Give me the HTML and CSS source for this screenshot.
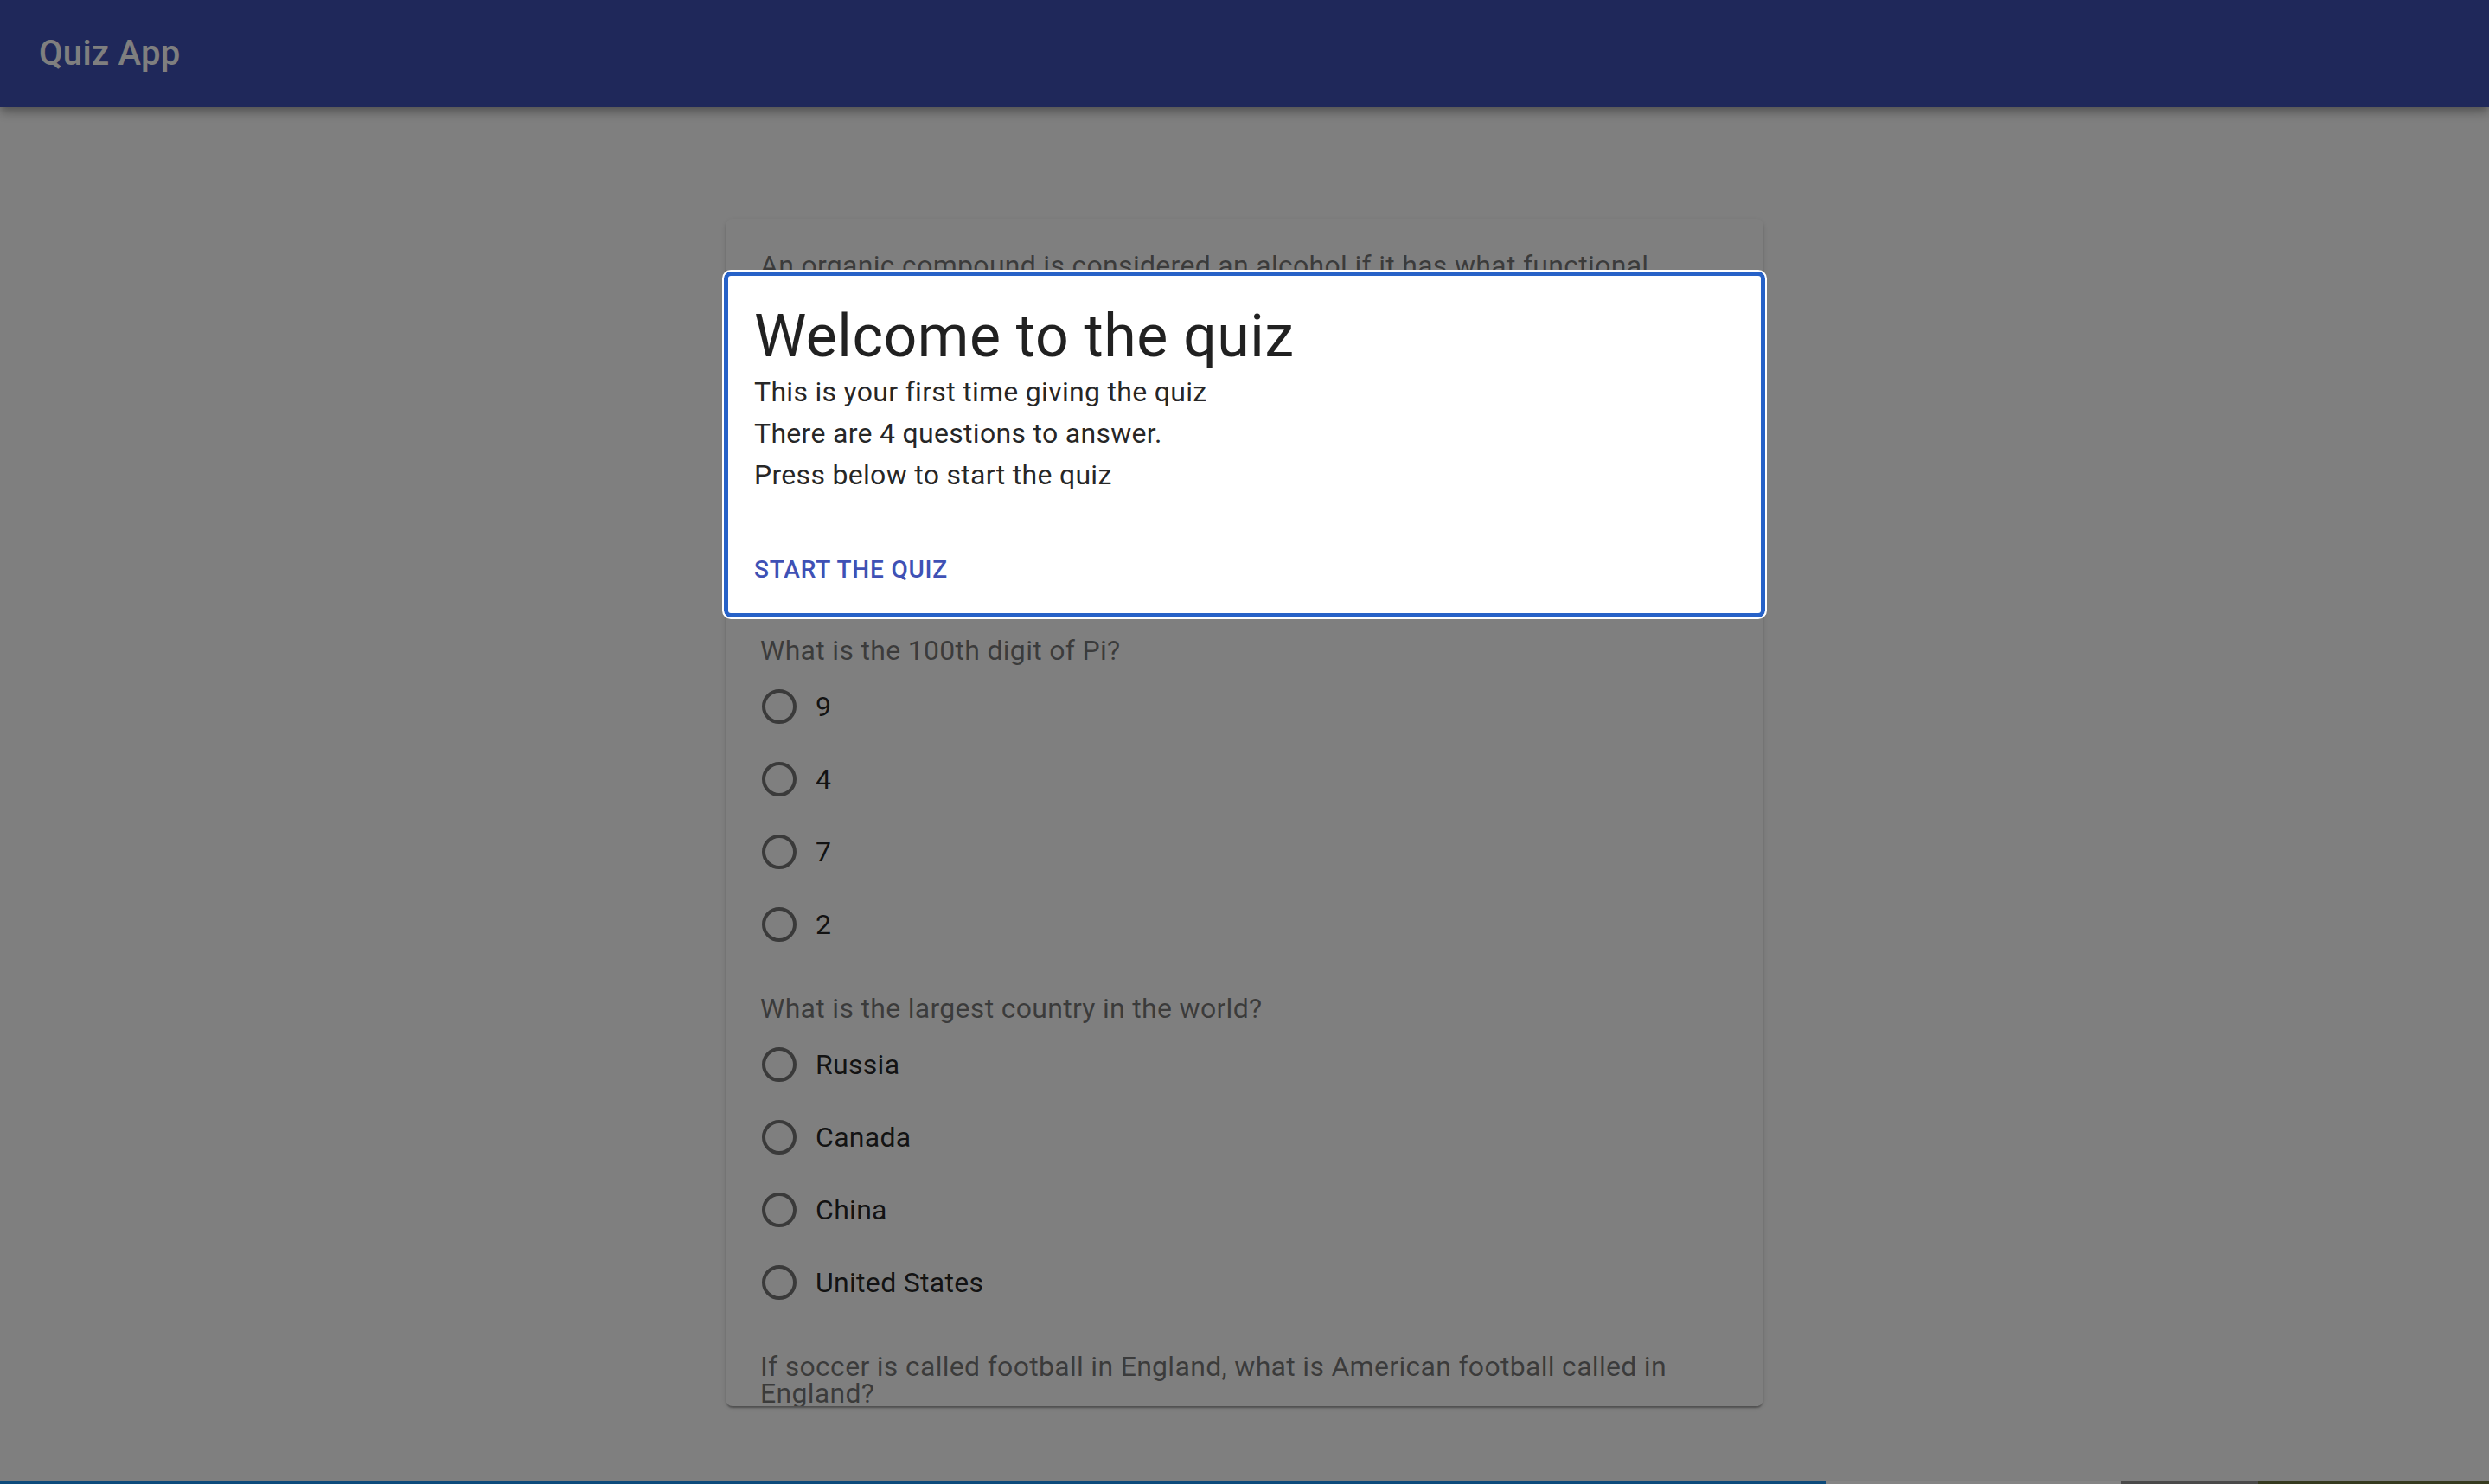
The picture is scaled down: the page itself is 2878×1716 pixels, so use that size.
FILE: index.html
```html
<!DOCTYPE html>
<html lang="en">
<head>
<meta charset="utf-8">
<title>Quiz App</title>
<link rel="stylesheet" href="styles.css">
</head>
<body>
<div class="page">
  <header class="appbar">
    <h1 class="appbar-title">Quiz App</h1>
  </header>
  <main class="main">
    <section class="card">
      <div class="question">
        <div class="q-label">An organic compound is considered an alcohol if it has what functional group?</div>
        <div class="options">
          <label class="option"><span class="radio"><svg viewBox="0 0 48 48" width="48" height="48"><circle cx="24" cy="24" r="18" fill="none" stroke="currentColor" stroke-width="4"/></svg></span><span class="opt-text">Hydroxyl</span></label>
          <label class="option"><span class="radio"><svg viewBox="0 0 48 48" width="48" height="48"><circle cx="24" cy="24" r="18" fill="none" stroke="currentColor" stroke-width="4"/></svg></span><span class="opt-text">Carbonyl</span></label>
          <label class="option"><span class="radio"><svg viewBox="0 0 48 48" width="48" height="48"><circle cx="24" cy="24" r="18" fill="none" stroke="currentColor" stroke-width="4"/></svg></span><span class="opt-text">Carboxyl</span></label>
          <label class="option"><span class="radio"><svg viewBox="0 0 48 48" width="48" height="48"><circle cx="24" cy="24" r="18" fill="none" stroke="currentColor" stroke-width="4"/></svg></span><span class="opt-text">Amine</span></label>
        </div>
      </div>
      <div class="question">
        <div class="q-label">What is the 100th digit of Pi?</div>
        <div class="options">
          <label class="option"><span class="radio"><svg viewBox="0 0 48 48" width="48" height="48"><circle cx="24" cy="24" r="18" fill="none" stroke="currentColor" stroke-width="4"/></svg></span><span class="opt-text">9</span></label>
          <label class="option"><span class="radio"><svg viewBox="0 0 48 48" width="48" height="48"><circle cx="24" cy="24" r="18" fill="none" stroke="currentColor" stroke-width="4"/></svg></span><span class="opt-text">4</span></label>
          <label class="option"><span class="radio"><svg viewBox="0 0 48 48" width="48" height="48"><circle cx="24" cy="24" r="18" fill="none" stroke="currentColor" stroke-width="4"/></svg></span><span class="opt-text">7</span></label>
          <label class="option"><span class="radio"><svg viewBox="0 0 48 48" width="48" height="48"><circle cx="24" cy="24" r="18" fill="none" stroke="currentColor" stroke-width="4"/></svg></span><span class="opt-text">2</span></label>
        </div>
      </div>
      <div class="question">
        <div class="q-label">What is the largest country in the world?</div>
        <div class="options">
          <label class="option"><span class="radio"><svg viewBox="0 0 48 48" width="48" height="48"><circle cx="24" cy="24" r="18" fill="none" stroke="currentColor" stroke-width="4"/></svg></span><span class="opt-text">Russia</span></label>
          <label class="option"><span class="radio"><svg viewBox="0 0 48 48" width="48" height="48"><circle cx="24" cy="24" r="18" fill="none" stroke="currentColor" stroke-width="4"/></svg></span><span class="opt-text">Canada</span></label>
          <label class="option"><span class="radio"><svg viewBox="0 0 48 48" width="48" height="48"><circle cx="24" cy="24" r="18" fill="none" stroke="currentColor" stroke-width="4"/></svg></span><span class="opt-text">China</span></label>
          <label class="option"><span class="radio"><svg viewBox="0 0 48 48" width="48" height="48"><circle cx="24" cy="24" r="18" fill="none" stroke="currentColor" stroke-width="4"/></svg></span><span class="opt-text">United States</span></label>
        </div>
      </div>
      <div class="question">
        <div class="q-label">If soccer is called football in England, what is American football called in England?</div>
        <div class="options">
          <label class="option"><span class="radio"><svg viewBox="0 0 48 48" width="48" height="48"><circle cx="24" cy="24" r="18" fill="none" stroke="currentColor" stroke-width="4"/></svg></span><span class="opt-text">American football</span></label>
        </div>
      </div>
    </section>
  </main>
  <div class="dock-strip">
    <span class="seg seg-blue"></span>
    <span class="seg seg-gray"></span>
    <span class="seg seg-dark"></span>
    <span class="seg seg-olive"></span>
  </div>
</div>

<div class="backdrop"></div>

<div class="dialog" role="dialog">
  <h2 class="dialog-title">Welcome to the quiz</h2>
  <div class="dialog-body">
    <p>This is your first time giving the quiz</p>
    <p>There are 4 questions to answer.</p>
    <p>Press below to start the quiz</p>
  </div>
  <div class="dialog-actions">
    <button class="text-button" type="button">Start the quiz</button>
  </div>
</div>
</body>
</html>
```

FILE: styles.css
```css
* {
  box-sizing: border-box;
}

html, body {
  margin: 0;
  padding: 0;
  height: 100%;
}

body {
  font-family: Roboto, "Liberation Sans", Arial, sans-serif;
  background: #ffffff;
  color: rgba(0, 0, 0, 0.87);
  overflow: hidden;
}

.page {
  display: flex;
  flex-direction: column;
  height: 1716px;
}

.appbar {
  flex: 0 0 124px;
  display: flex;
  align-items: center;
  padding: 0 45px;
  background: #3f51b5;
  color: #ffffff;
  box-shadow: 0 4px 8px -2px rgba(0, 0, 0, 0.2), 0 8px 10px 0 rgba(0, 0, 0, 0.14), 0 2px 20px 0 rgba(0, 0, 0, 0.12);
  position: relative;
  z-index: 2;
}

.appbar-title {
  margin: 0;
  font-size: 40px;
  font-weight: 500;
  letter-spacing: 0.3px;
  line-height: 1.6;
}

.main {
  flex: 1 1 auto;
  display: flex;
  justify-content: center;
  padding-top: 129px;
  min-height: 0;
}

.card {
  width: 1200px;
  height: 1373px;
  overflow: hidden;
  background: #ffffff;
  border-radius: 8px;
  padding: 31px 56px 0 40px;
  display: flex;
  flex-direction: column;
  gap: 32px;
  box-shadow: 0 4px 2px -2px rgba(0, 0, 0, 0.2), 0 2px 2px 0 rgba(0, 0, 0, 0.14), 0 2px 6px 0 rgba(0, 0, 0, 0.12);
}

.question {
  display: flex;
  flex-direction: column;
}

.q-label {
  font-size: 32px;
  line-height: 31px;
  padding: 7.5px 0;
  color: rgba(0, 0, 0, 0.54);
  letter-spacing: 0.3px;
}

.options {
  display: flex;
  flex-direction: column;
}

.option {
  display: flex;
  align-items: center;
  height: 84px;
  margin-left: -20px;
}

.radio {
  flex: 0 0 84px;
  height: 84px;
  display: flex;
  align-items: center;
  justify-content: center;
  color: rgba(0, 0, 0, 0.54);
}

.radio svg {
  display: block;
}

.opt-text {
  font-size: 32px;
  line-height: 48px;
  letter-spacing: 0.3px;
  color: rgba(0, 0, 0, 0.87);
}

.dock-strip {
  flex: 0 0 3px;
  display: flex;
  position: relative;
  z-index: 11;
}

.seg {
  display: block;
  height: 3px;
}

.seg-blue {
  width: 2111px;
  background: #0d4b7c;
}

.seg-gray {
  width: 342px;
  background: #858585;
}

.seg-dark {
  width: 158px;
  background: #4a4a4a;
}

.seg-olive {
  flex: 1;
  background: #363a1f;
}

.backdrop {
  position: fixed;
  top: 0;
  left: 0;
  right: 0;
  bottom: 0;
  background: rgba(0, 0, 0, 0.5);
  z-index: 10;
}

.dialog {
  position: fixed;
  top: 312px;
  left: 50%;
  transform: translateX(-50%);
  width: 1208px;
  z-index: 12;
  background: #ffffff;
  border: 2px solid #ffffff;
  border-radius: 10px;
  box-shadow: inset 0 0 0 5px #2762c8;
  padding: 35px 35px 31px 35px;
  display: flex;
  flex-direction: column;
}

.dialog-title {
  margin: 0;
  font-size: 68px;
  font-weight: 400;
  line-height: 80px;
  letter-spacing: 0.5px;
  color: rgba(0, 0, 0, 0.87);
}

.dialog-body p {
  margin: 0;
  font-size: 32px;
  line-height: 48px;
  letter-spacing: 0.3px;
  color: rgba(0, 0, 0, 0.87);
}

.dialog-actions {
  margin-top: 61px;
  display: flex;
}

.text-button {
  font-family: Roboto, "Liberation Sans", Arial, sans-serif;
  font-size: 28px;
  font-weight: 500;
  line-height: 49px;
  letter-spacing: 0.8px;
  text-transform: uppercase;
  color: #3f51b5;
  background: none;
  border: 0;
  padding: 0;
  cursor: pointer;
}
```
